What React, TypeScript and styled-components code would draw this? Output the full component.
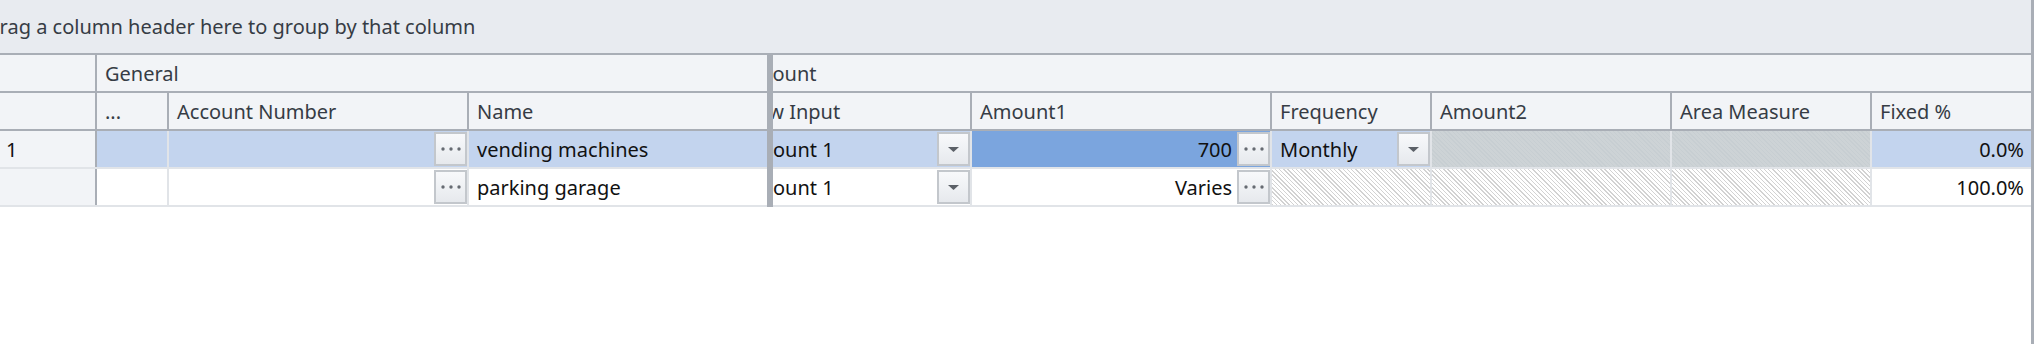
import React from "react";
import styled, { createGlobalStyle, css } from "styled-components";

const C = {
  panel: "#e8ebf0",
  headerBg: "#f2f4f7",
  line: "#a9aeb6",
  cellLine: "#e1e4e8",
  sel: "#c3d4ee",
  focus: "#7ba5de",
  disabled: "#cdd3d6",
  text: "#111111",
  headText: "#363c45",
};

const Global = createGlobalStyle`
  html, body { margin: 0; padding: 0; background: #ffffff; }
  body {
    font-family: "Noto Sans", "Open Sans", sans-serif;
    font-size: 20px;
    color: ${C.text};
  }
`;

const Frame = styled.div`
  width: 2031px;
  height: 344px;
  border-right: 3px solid ${C.line};
  display: flex;
  flex-direction: column;
  overflow: hidden;
`;

const GroupPanel = styled.div`
  height: 53px;
  flex: none;
  background: ${C.panel};
  border-bottom: 2px solid ${C.line};
  display: flex;
  align-items: center;
  overflow: hidden;
  color: ${C.headText};
`;

const GroupHint = styled.span`
  margin-left: -15px;
  white-space: nowrap;
`;

const Body = styled.div`
  display: flex;
  align-items: stretch;
  flex: none;
`;

const Pane = styled.div`
  display: flex;
  flex-direction: column;
  flex: none;
`;

const ScrollPane = styled.div`
  flex: 1;
  min-width: 0;
  overflow: hidden;
`;

const Track = styled.div<{ $offset: number }>`
  display: flex;
  flex-direction: column;
  width: max-content;
  margin-left: ${(p) => -p.$offset}px;
`;

const FixedSeparator = styled.div`
  width: 6px;
  flex: none;
  background: ${C.line};
`;

const Row = styled.div<{ $header?: boolean }>`
  display: flex;
  height: 36px;
  border-bottom: 2px solid ${(p) => (p.$header ? C.line : C.cellLine)};
`;

type Fill = "plain" | "header" | "sel" | "focus" | "disabled" | "hatch";

const fills: Record<Fill, ReturnType<typeof css>> = {
  plain: css`background: #ffffff;`,
  header: css`background: ${C.headerBg};`,
  sel: css`background: ${C.sel};`,
  focus: css`background: ${C.focus};`,
  disabled: css`
    background: repeating-linear-gradient(
      45deg,
      #c7ced2 0px,
      #c7ced2 1px,
      ${C.disabled} 1px,
      ${C.disabled} 3px
    );
  `,
  hatch: css`
    background: repeating-linear-gradient(
      45deg,
      #d2d2d2 0px,
      #d2d2d2 1px,
      #ffffff 1px,
      #ffffff 3px
    );
  `,
};

const Cell = styled.div<{
  $w: number;
  $fill?: Fill;
  $right?: boolean;
  $border?: "none" | "light" | "dark";
  $header?: boolean;
  $pad?: number;
}>`
  width: ${(p) => p.$w}px;
  flex: none;
  display: flex;
  align-items: center;
  justify-content: ${(p) => (p.$right ? "flex-end" : "flex-start")};
  padding-left: ${(p) => (p.$right ? 0 : p.$pad ?? 8)}px;
  box-sizing: border-box;
  white-space: nowrap;
  overflow: hidden;
  color: ${(p) => (p.$header ? C.headText : C.text)};
  border-right: ${(p) =>
    p.$border === "none"
      ? "none"
      : `2px solid ${p.$border === "dark" || p.$header ? C.line : C.cellLine}`};
  ${(p) => fills[p.$fill ?? "plain"]}
`;

const CellText = styled.span<{ $right?: boolean; $gap?: number }>`
  flex: 1;
  min-width: 0;
  text-align: ${(p) => (p.$right ? "right" : "left")};
  padding-right: ${(p) => p.$gap ?? 0}px;
  overflow: hidden;
`;

const EditButton = styled.div`
  width: 33px;
  height: 34px;
  flex: none;
  box-sizing: border-box;
  border: 2px solid #c3c7cc;
  background: linear-gradient(#f8f9fb, #e6e9ed);
  display: flex;
  align-items: center;
  justify-content: center;
`;

const Dots = () => (
  <svg width="20" height="4" viewBox="0 0 20 4">
    <circle cx="2" cy="2" r="1.7" fill="#666b72" />
    <circle cx="10" cy="2" r="1.7" fill="#666b72" />
    <circle cx="18" cy="2" r="1.7" fill="#666b72" />
  </svg>
);

const Arrow = () => (
  <svg width="11" height="5" viewBox="0 0 11 5">
    <polygon points="0,0 11,0 5.5,5" fill="#5b6067" />
  </svg>
);

const EllipsisButton = () => (
  <EditButton>
    <Dots />
  </EditButton>
);

const ComboButton = () => (
  <EditButton>
    <Arrow />
  </EditButton>
);

/* column widths (border included) */
const W = {
  indicator: 97,
  dots: 72,
  account: 300,
  name: 298,
  flow: 239,
  amount1: 300,
  freq: 160,
  amount2: 240,
  area: 200,
  fixed: 159,
};
const SCROLL_OFFSET = 40;

type RowData = {
  indicator: string;
  name: string;
  flow: string;
  amount1: string;
  freq: string | null;
  fixed: string;
  selected: boolean;
};

const rows: RowData[] = [
  {
    indicator: "1",
    name: "vending machines",
    flow: "Account 1",
    amount1: "700",
    freq: "Monthly",
    fixed: "0.0%",
    selected: true,
  },
  {
    indicator: "",
    name: "parking garage",
    flow: "Account 1",
    amount1: "Varies",
    freq: null,
    fixed: "100.0%",
    selected: false,
  },
];

export default function App() {
  return (
    <>
      <Global />
      <Frame>
        <GroupPanel>
          <GroupHint>Drag a column header here to group by that column</GroupHint>
        </GroupPanel>
        <Body>
          <Pane>
            <Row $header>
              <Cell $w={W.indicator} $fill="header" $header />
              <Cell
                $w={W.dots + W.account + W.name}
                $fill="header"
                $header
                $border="none"
              >
                General
              </Cell>
            </Row>
            <Row $header>
              <Cell $w={W.indicator} $fill="header" $header />
              <Cell $w={W.dots} $fill="header" $header>
                ...
              </Cell>
              <Cell $w={W.account} $fill="header" $header>
                Account Number
              </Cell>
              <Cell $w={W.name} $fill="header" $header $border="none">
                Name
              </Cell>
            </Row>
            {rows.map((r, i) => {
              const f: Fill = r.selected ? "sel" : "plain";
              return (
                <Row key={i}>
                  <Cell $w={W.indicator} $fill="header" $border="dark" $pad={6}>
                    {r.indicator}
                  </Cell>
                  <Cell $w={W.dots} $fill={f} />
                  <Cell $w={W.account} $fill={f}>
                    <CellText />
                    <EllipsisButton />
                  </Cell>
                  <Cell $w={W.name} $fill={f} $border="none">
                    {r.name}
                  </Cell>
                </Row>
              );
            })}
          </Pane>
          <FixedSeparator />
          <ScrollPane>
            <Track $offset={SCROLL_OFFSET}>
              <Row $header>
                <Cell
                  $w={W.flow + W.amount1 + W.freq + W.amount2 + W.area + W.fixed}
                  $fill="header"
                  $header
                  $border="none"
                >
                  Amount
                </Cell>
              </Row>
              <Row $header>
                <Cell $w={W.flow} $fill="header" $header>
                  Flow Input
                </Cell>
                <Cell $w={W.amount1} $fill="header" $header>
                  Amount1
                </Cell>
                <Cell $w={W.freq} $fill="header" $header>
                  Frequency
                </Cell>
                <Cell $w={W.amount2} $fill="header" $header>
                  Amount2
                </Cell>
                <Cell $w={W.area} $fill="header" $header>
                  Area Measure
                </Cell>
                <Cell $w={W.fixed} $fill="header" $header $border="none">
                  Fixed %
                </Cell>
              </Row>
              {rows.map((r, i) => {
                const f: Fill = r.selected ? "sel" : "plain";
                const off: Fill = r.selected ? "disabled" : "hatch";
                return (
                  <Row key={i}>
                    <Cell $w={W.flow} $fill={f}>
                      <CellText>{r.flow}</CellText>
                      <ComboButton />
                    </Cell>
                    <Cell $w={W.amount1} $fill={r.selected ? "focus" : "plain"}>
                      <CellText $right $gap={5}>
                        {r.amount1}
                      </CellText>
                      <EllipsisButton />
                    </Cell>
                    {r.freq ? (
                      <Cell $w={W.freq} $fill={f}>
                        <CellText>{r.freq}</CellText>
                        <ComboButton />
                      </Cell>
                    ) : (
                      <Cell $w={W.freq} $fill="hatch" />
                    )}
                    <Cell $w={W.amount2} $fill={off} />
                    <Cell $w={W.area} $fill={off} />
                    <Cell $w={W.fixed} $fill={f} $border="none">
                      <CellText $right $gap={7}>
                        {r.fixed}
                      </CellText>
                    </Cell>
                  </Row>
                );
              })}
            </Track>
          </ScrollPane>
        </Body>
      </Frame>
    </>
  );
}
